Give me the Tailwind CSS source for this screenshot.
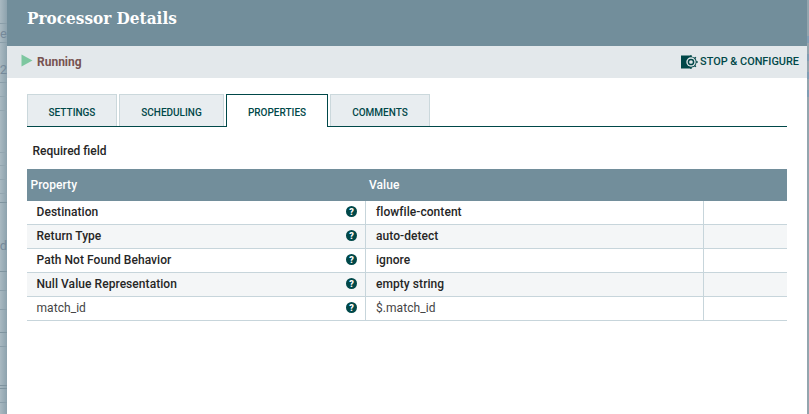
<!DOCTYPE html>
<html lang="en">
<head>
  <meta charset="UTF-8">
  <title>Processor Details</title>
  <script src="https://cdn.jsdelivr.net/npm/@tailwindcss/browser@4"></script>
</head>
<body class="h-[414px] w-[809px] overflow-hidden bg-[#8fa3ad] font-['Roboto',sans-serif] text-[#262626]">
  <div class="flex h-[414px]">
    <!-- canvas behind the dialog -->
    <div class="flex h-full w-[7px] flex-col overflow-hidden bg-linear-to-r from-[#a9b9c1] to-[#8da2ad] text-[13px] leading-none whitespace-nowrap text-[#75899a]">
      <div class="h-[24px] shrink-0 border-b border-[#8a9ea9]"></div>
      <div class="flex h-[19px] shrink-0 items-center justify-end overflow-hidden border-b border-[#8a9ea9]">te</div>
      <div class="flex h-[40px] shrink-0 items-end justify-end overflow-hidden border-b border-[#8a9ea9] pb-[6px]">32</div>
      <div class="h-[14px] shrink-0 border-b border-[#93a6b0]"></div>
      <div class="h-[14px] shrink-0 border-b border-[#93a6b0]"></div>
      <div class="h-[42px] shrink-0 border-b border-[#93a6b0]"></div>
      <div class="h-[13px] shrink-0 border-b border-[#93a6b0]"></div>
      <div class="h-[14px] shrink-0 border-b border-[#93a6b0]"></div>
      <div class="h-[14px] shrink-0 border-b border-[#93a6b0]"></div>
      <div class="h-[9px] shrink-0 border-b border-[#7f949f]"></div>
      <div class="flex h-[69px] shrink-0 items-center justify-end overflow-hidden border-b border-[#7f949f] pt-[16px]">rd</div>
      <div class="h-[19px] shrink-0 border-b border-[#8a9ea9]"></div>
      <div class="h-[19px] shrink-0 border-b border-[#8a9ea9]"></div>
      <div class="h-[23px] shrink-0 border-b border-[#7f949f]"></div>
      <div class="h-[14px] shrink-0 border-b border-[#8a9ea9]"></div>
      <div class="h-[39px] shrink-0 border-b border-[#7f949f]"></div>
      <div class="h-[3px] shrink-0 border-b border-[#7f949f]"></div>
      <div class="h-[14px] shrink-0 border-b border-[#8a9ea9]"></div>
    </div>

    <!-- dialog -->
    <div class="flex h-full w-[800px] flex-col bg-white">
      <div class="flex h-[46px] items-center bg-[#728e9b] pb-[8px] pl-[20px] font-['DejaVu_Serif_Condensed','DejaVu_Serif',serif] text-[17px] font-bold text-white">Processor Details</div>

      <div class="flex h-[32px] items-center justify-between bg-[#e3e8eb] pl-[14px] pr-[8px]">
        <div class="flex items-center gap-[4px]">
          <svg width="12" height="13" viewBox="0 0 12 13" class="mb-[3px]"><path d="M0.5 0.5L11.5 6.5L0.5 12.5Z" fill="#7dc7a0"/></svg>
          <span class="mb-[1px] text-[12px] font-bold text-[#775351]">Running</span>
        </div>
        <div class="flex items-center gap-[2px] text-[10.9px] font-medium text-[#004849]">
          <svg width="17" height="14" viewBox="0 0 17 14">
            <rect x="0" y="0.5" width="10" height="13" fill="#004849"/>
            <path d="M10 0.2V13.8M3.2 7H16.8M5.2 2.2L14.8 11.8M14.8 2.2L5.2 11.8" stroke="#004849" stroke-width="1.6"/>
            <circle cx="10" cy="7" r="5.6" fill="#004849"/>
            <circle cx="10" cy="7" r="4.7" fill="#e3e8eb"/>
            <circle cx="10" cy="7" r="2.6" fill="none" stroke="#004849" stroke-width="1.5"/>
          </svg>
          <span>STOP &amp; CONFIGURE</span>
        </div>
      </div>

      <div class="px-[20px] pt-[16px]">
        <!-- tabs -->
        <div class="flex h-[33px] w-[760px] gap-[2px] border-b border-[#004849] text-[10px] font-medium text-[#004849]">
          <div class="flex h-[32px] w-[90px] items-center justify-center border border-b-0 border-[#cbd8dc] bg-[#e8edf0] pt-[3px]">SETTINGS</div>
          <div class="flex h-[32px] w-[105px] items-center justify-center border border-b-0 border-[#cbd8dc] bg-[#e8edf0] pt-[3px]">SCHEDULING</div>
          <div class="flex h-[33px] w-[102px] items-center justify-center border border-b-0 border-[#004849] bg-white pt-[2px]">PROPERTIES</div>
          <div class="flex h-[32px] w-[100px] items-center justify-center border border-b-0 border-[#cbd8dc] bg-[#e8edf0] pt-[3px]">COMMENTS</div>
        </div>

        <div class="flex h-[42px] items-center pt-[6px] pl-[5.5px] text-[12px] font-medium">Required field</div>

        <!-- properties table -->
        <div class="w-[760px] text-[12px] tracking-[0.06px]">
          <div class="flex h-[32px] items-center bg-[#728e9b] font-medium text-white">
            <div class="w-[338px] pl-[3.5px]">Property</div>
            <div class="pl-[4px]">Value</div>
          </div>
          <div class="flex h-[24px] items-center border-b border-[#c7d5db] bg-white font-medium">
            <div class="flex h-full w-[339px] items-center justify-between border-r border-[#c7d5db] pb-[2px] pl-[9.5px] pr-[8px]">
              <span>Destination</span>
              <svg width="11" height="11" viewBox="0 0 11 11"><circle cx="5.5" cy="5.5" r="5.5" fill="#004849"/><text x="5.5" y="8.6" text-anchor="middle" font-family="Roboto" font-weight="900" font-size="9" fill="#fff">?</text></svg>
            </div>
            <div class="flex h-full w-[338px] items-center border-r border-[#c7d5db] pb-[2px] pl-[10px]">flowfile-content</div>
          </div>
          <div class="flex h-[24px] items-center border-b border-[#c7d5db] bg-[#f4f6f7] font-medium">
            <div class="flex h-full w-[339px] items-center justify-between border-r border-[#c7d5db] pb-[2px] pl-[9.5px] pr-[8px]">
              <span>Return Type</span>
              <svg width="11" height="11" viewBox="0 0 11 11"><circle cx="5.5" cy="5.5" r="5.5" fill="#004849"/><text x="5.5" y="8.6" text-anchor="middle" font-family="Roboto" font-weight="900" font-size="9" fill="#fff">?</text></svg>
            </div>
            <div class="flex h-full w-[338px] items-center border-r border-[#c7d5db] pb-[2px] pl-[10px]">auto-detect</div>
          </div>
          <div class="flex h-[24px] items-center border-b border-[#c7d5db] bg-white font-medium">
            <div class="flex h-full w-[339px] items-center justify-between border-r border-[#c7d5db] pb-[2px] pl-[9.5px] pr-[8px]">
              <span>Path Not Found Behavior</span>
              <svg width="11" height="11" viewBox="0 0 11 11"><circle cx="5.5" cy="5.5" r="5.5" fill="#004849"/><text x="5.5" y="8.6" text-anchor="middle" font-family="Roboto" font-weight="900" font-size="9" fill="#fff">?</text></svg>
            </div>
            <div class="flex h-full w-[338px] items-center border-r border-[#c7d5db] pb-[2px] pl-[10px]">ignore</div>
          </div>
          <div class="flex h-[24px] items-center border-b border-[#c7d5db] bg-[#f4f6f7] font-medium">
            <div class="flex h-full w-[339px] items-center justify-between border-r border-[#c7d5db] pb-[2px] pl-[9.5px] pr-[8px]">
              <span>Null Value Representation</span>
              <svg width="11" height="11" viewBox="0 0 11 11"><circle cx="5.5" cy="5.5" r="5.5" fill="#004849"/><text x="5.5" y="8.6" text-anchor="middle" font-family="Roboto" font-weight="900" font-size="9" fill="#fff">?</text></svg>
            </div>
            <div class="flex h-full w-[338px] items-center border-r border-[#c7d5db] pb-[2px] pl-[10px]">empty string</div>
          </div>
          <div class="flex h-[24px] items-center border-b border-[#c7d5db] bg-white text-[#444]">
            <div class="flex h-full w-[339px] items-center justify-between border-r border-[#c7d5db] pb-[2px] pl-[9.5px] pr-[8px]">
              <span>match_id</span>
              <svg width="11" height="11" viewBox="0 0 11 11"><circle cx="5.5" cy="5.5" r="5.5" fill="#004849"/><text x="5.5" y="8.6" text-anchor="middle" font-family="Roboto" font-weight="900" font-size="9" fill="#fff">?</text></svg>
            </div>
            <div class="flex h-full w-[338px] items-center border-r border-[#c7d5db] pb-[2px] pl-[10px]">$.match_id</div>
          </div>
        </div>
      </div>
    </div>

    <!-- canvas edge on the right -->
    <div class="flex h-full w-[2px] flex-col gap-[11px] bg-[#93a5ae] pt-[36px]">
      <div class="h-[7px] bg-[#7f9db3]"></div>
      <div class="h-[7px] bg-[#7f9db3]"></div>
      <div class="h-[7px] bg-[#7f9db3]"></div>
      <div class="h-[7px] bg-[#7f9db3]"></div>
    </div>
  </div>
</body>
</html>
